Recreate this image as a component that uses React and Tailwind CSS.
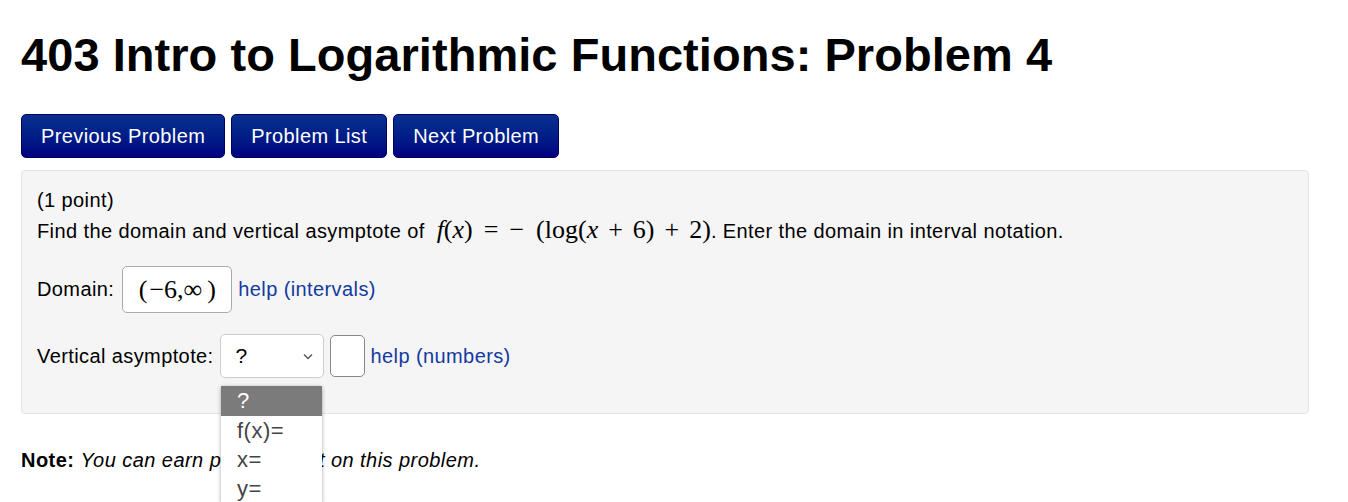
const NavButton = ({ children }) => (
  <button className="h-[44px] px-[19px] rounded-[5px] border border-[#00005c] bg-gradient-to-b from-[#0a2f8f] to-[#000080] text-white text-[20px] tracking-[0.4px] leading-none">
    {children}
  </button>
);

// MathJax-ish rendering with a serif face and TeX-like spacing
const M = ({ children, className = '' }) => (
  <span className={`font-['Liberation_Serif',serif] tracking-normal ${className}`}>{children}</span>
);

export default function App() {
  return (
    <div className="w-[1348px] h-[502px] overflow-hidden bg-white font-['Liberation_Sans',Arial,sans-serif] text-black relative">
      <div className="px-[21px]">
        <h1 className="pt-[25px] text-[47px] font-bold leading-[60px] tracking-[0.05px]">
          403 Intro to Logarithmic Functions: Problem 4
        </h1>

        <div className="mt-[29px] flex gap-[6px]">
          <NavButton>Previous Problem</NavButton>
          <NavButton>Problem List</NavButton>
          <NavButton>Next Problem</NavButton>
        </div>

        <div className="mt-[12px] w-[1288px] h-[244px] bg-[#f5f5f5] border border-[#e3e3e3] rounded-[4px] px-[15px] pt-[16px] text-[20px] tracking-[0.4px]">
          <div className="leading-[26px]">(1 point)</div>
          <div className="leading-[30px] mt-[2px] flex items-baseline whitespace-pre">
            <span>Find the domain and vertical asymptote of  </span>
            <M className="text-[26px]">
              <i>f</i>(<i>x</i>)
              <span className="mx-[11px]">=</span>
              <span className="mr-[12px]">−</span>
              (log(<i>x</i>
              <span className="mx-[10px]">+</span>
              6)
              <span className="mx-[10px]">+</span>
              2)
            </M>
            <span>. Enter the domain in interval notation.</span>
          </div>

          <div className="mt-[19px] flex items-center h-[48px]">
            <span>Domain:</span>
            <div className="ml-[8px] w-[110px] h-[47px] bg-white border border-[#aaa] rounded-[5px] flex items-center justify-center">
              <M className="text-[26px]">
                (<span className="ml-[2px]">−6,∞</span>
                <span className="ml-[5px]">)</span>
              </M>
            </div>
            <a className="ml-[6px] text-[#133aa0]">help (intervals)</a>
          </div>

          <div className="mt-[20px] flex items-center h-[46px]">
            <span>Vertical asymptote:</span>
            <div className="ml-[6px] w-[104px] h-[44px] bg-white border border-[#ccc] rounded-[5px] flex items-center justify-between pl-[15px] pr-[9px] text-[21px]">
              <span>?</span>
              <svg width="12" height="12" viewBox="0 0 12 12" className="text-[#555]">
                <path d="M2 4.5l4 4 4-4" fill="none" stroke="currentColor" strokeWidth="1.4" />
              </svg>
            </div>
            <div className="ml-[6px] w-[35px] h-[42px] bg-white border border-[#888] rounded-[5px]" />
            <a className="ml-[6px] text-[#133aa0]">help (numbers)</a>
          </div>
        </div>

        <div className="mt-[33px] text-[20px] tracking-[0.45px] leading-[26px]">
          <b>Note:</b> <i>You can earn partial credit on this problem.</i>
        </div>
      </div>

      <div className="absolute left-[221px] top-[386px] w-[101px] bg-white shadow-[0_1px_4px_rgba(0,0,0,0.35)] text-[22px] tracking-[0.5px] text-[#444] leading-[29px]">
        <div className="bg-[#7b7b7b] text-white pl-[16px] h-[30px]">?</div>
        <div className="pl-[16px]">f(x)=</div>
        <div className="pl-[16px]">x=</div>
        <div className="pl-[16px]">y=</div>
      </div>
    </div>
  );
}
